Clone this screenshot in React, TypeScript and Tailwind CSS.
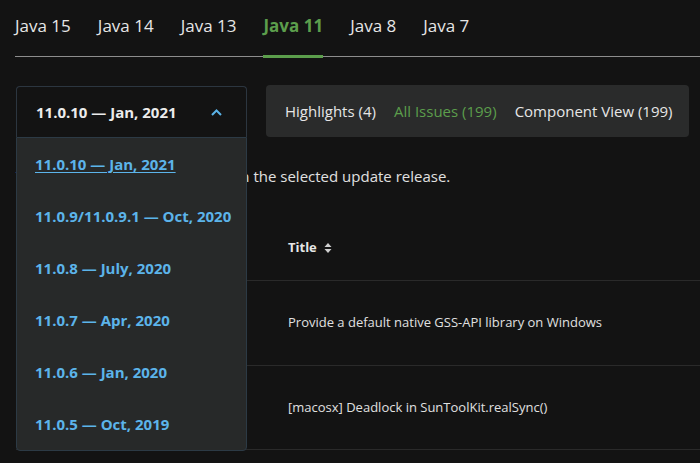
import React from "react";

const tabs = ["Java 15", "Java 14", "Java 13", "Java 11", "Java 8", "Java 7"];
const items = [
  "11.0.10 — Jan, 2021",
  "11.0.9/11.0.9.1 — Oct, 2020",
  "11.0.8 — July, 2020",
  "11.0.7 — Apr, 2020",
  "11.0.6 — Jan, 2020",
  "11.0.5 — Oct, 2019",
];

export default function App() {
  return (
    <div
      className="relative w-[700px] h-[463px] overflow-hidden bg-[#131313] text-[#e6e6e6]"
      style={{ fontFamily: '"Open Sans", "Noto Sans", sans-serif' }}
    >
      <div className="pl-[15px]">
        <div className="flex gap-[27px] border-b border-[#8d8d8d]">
          {tabs.map((t) => (
            <div
              key={t}
              className={
                t === "Java 11"
                  ? "relative pt-[14px] pb-[18px] text-[17px] leading-[24px] font-bold text-[#5c9e4c]"
                  : "pt-[14px] pb-[18px] text-[17px] leading-[24px] text-[#e6e6e6]"
              }
            >
              {t}
              {t === "Java 11" && (
                <div className="absolute left-0 right-0 -bottom-[2px] h-[3px] bg-[#5c9e4c]" />
              )}
            </div>
          ))}
        </div>
      </div>

      <div className="flex pl-[16px] pt-[28px]">
        <div className="w-[231px] h-[52px] shrink-0" />
        <div className="ml-[19px] w-[423px] h-[52px] rounded-[4px] bg-[#2a2b2b] flex items-center pl-[19px] gap-[18px] text-[15px]">
          <span className="text-[#e6e6e6]">Highlights (4)</span>
          <span className="text-[#5c9e4c]">All Issues (199)</span>
          <span className="text-[#e6e6e6]">Component View (199)</span>
        </div>
      </div>

      <div className="pl-[16px] pt-[29px] text-[15px] leading-[20px] text-[#e0e0e0]">
        The following issues were fixed in the selected update release.
      </div>

      <div className="pl-[16px] pt-[29px]">
        <div className="flex items-center h-[66px] border-b border-[#2a2a2a]">
          <div className="w-[256px] shrink-0 pl-[16px] text-[13px] font-bold">Issue</div>
          <div className="pl-[16px] flex items-center gap-[7px] text-[13px] font-bold text-[#e6e6e6]">
            Title
            <svg width="8" height="12" viewBox="0 0 8 12" fill="#cfcfcf">
              <path d="M4 1 L7.5 5 H0.5 Z" />
              <path d="M4 11 L7.5 7 H0.5 Z" />
            </svg>
          </div>
        </div>
        <div className="flex items-center h-[85px] border-b border-[#2a2a2a]">
          <div className="w-[256px] shrink-0" />
          <div className="pl-[16px] text-[13px] text-[#e0e0e0]">
            Provide a default native GSS-API library on Windows
          </div>
        </div>
        <div className="flex items-center h-[84px] border-b border-[#2a2a2a]">
          <div className="w-[256px] shrink-0" />
          <div className="pl-[16px] text-[13px] text-[#e0e0e0]">
            [macosx] Deadlock in SunToolKit.realSync()
          </div>
        </div>
      </div>

      <div className="absolute left-[16px] top-[86px] w-[231px]">
        <div className="h-[51px] flex items-center justify-between pl-[19px] pr-[24px] border border-b-0 border-[#2c3640] rounded-t-[4px] bg-[#131313]">
          <span className="text-[15px] font-bold text-[#ececec]">11.0.10 — Jan, 2021</span>
          <svg width="11" height="7" viewBox="0 0 11 7" fill="none" stroke="#5ab2e6" strokeWidth="2">
            <path d="M1 6 L5.5 1.5 L10 6" />
          </svg>
        </div>
        <div className="bg-[#272929] border border-[#2c3a45] rounded-b-[4px]">
          {items.map((it, i) => (
            <div key={it} className="h-[52px] flex items-center pl-[18px]">
              <span
                className={
                  i === 0
                    ? "text-[15px] font-bold text-[#5cb4ea] underline underline-offset-2"
                    : "text-[15px] font-bold text-[#5cb4ea]"
                }
              >
                {it}
              </span>
            </div>
          ))}
        </div>
      </div>
    </div>
  );
}
